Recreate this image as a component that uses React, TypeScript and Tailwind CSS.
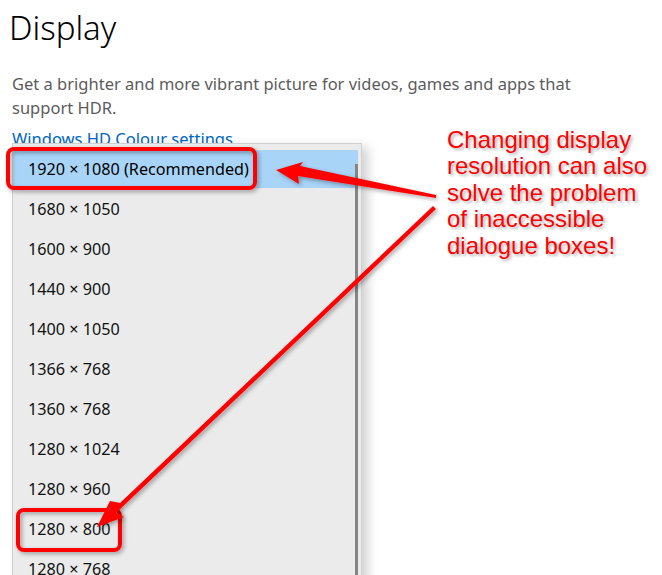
import React from "react";

const resolutions = [
  "1920 × 1080 (Recommended)",
  "1680 × 1050",
  "1600 × 900",
  "1440 × 900",
  "1400 × 1050",
  "1366 × 768",
  "1360 × 768",
  "1280 × 1024",
  "1280 × 960",
  "1280 × 800",
  "1280 × 768",
];

const Arrows: React.FC = () => (
  <svg
    className="absolute inset-0 pointer-events-none"
    width={662}
    height={575}
    viewBox="0 0 662 575"
  >
    <defs>
      <filter id="shade" x="-20%" y="-20%" width="140%" height="140%">
        <feDropShadow dx="2" dy="2" stdDeviation="2" floodColor="#000" floodOpacity="0.35" />
      </filter>
    </defs>
    <g fill="none" stroke="#ff0000" strokeWidth={4} filter="url(#shade)">
      <rect x={8} y={149} width={247} height={39} rx={6} />
      <rect x={18} y={510} width={102} height={40} rx={6} />
    </g>
    <g fill="#ff0000" filter="url(#shade)">
      {/* arrow to recommended row */}
      <polygon points="436,195 300,166 303,162 276,170 299,184 298,176 436,198" />
      {/* arrow to 1280 x 800 */}
      <polygon points="433,206 120,503 110,501 97,527 124,517 116,513 436,209" />
    </g>
  </svg>
);

export default function App() {
  return (
    <div
      className="relative w-[662px] h-[575px] overflow-hidden bg-white"
      style={{ fontFamily: '"Noto Sans", "Open Sans", sans-serif' }}
    >
      <div className="pl-[9px] pt-[6px]">
        <h1 className="text-[33px] font-light leading-[44px] text-black">Display</h1>
        <p className="mt-[22px] pl-[3px] text-[16.5px] leading-[24px] text-[#5c5c5c] w-[590px]">
          Get a brighter and more vibrant picture for videos, games and apps that support HDR.
        </p>
        <div className="mt-[9px] pl-[3px] text-[16.5px] leading-[20px] text-[#0067c0]">
          Windows HD Colour settings
        </div>
      </div>

      <div className="absolute left-[12px] top-[143px] w-[350px] h-[440px] bg-[#ebebeb] border border-[#cfcfcf] shadow-[6px_4px_10px_rgba(0,0,0,0.18)]">
        <ul className="pt-[6px] pr-[3px]">
          {resolutions.map((r, i) => (
            <li
              key={r}
              className={
                i === 0
                  ? "h-[38px] mb-[2px] pl-[15px] flex items-center text-[16.2px] text-black bg-[#a8d4f8]"
                  : "h-[38px] mb-[2px] pl-[15px] flex items-center text-[16.2px] text-[#111]"
              }
            >
              {r}
            </li>
          ))}
        </ul>
        <div className="absolute right-[3px] top-[20px] bottom-0 w-[3px] bg-[#858585]" />
      </div>

      <div
        className="absolute left-[447px] top-[127px] text-[24px] leading-[26.4px] text-[#ff0000] [text-shadow:2px_2px_3px_rgba(0,0,0,0.3)]"
        style={{ fontFamily: '"Liberation Sans", Arial, sans-serif' }}
      >
        Changing display
        <br />
        resolution can also
        <br />
        solve the problem
        <br />
        of inaccessible
        <br />
        dialogue boxes!
      </div>

      <Arrows />
    </div>
  );
}
